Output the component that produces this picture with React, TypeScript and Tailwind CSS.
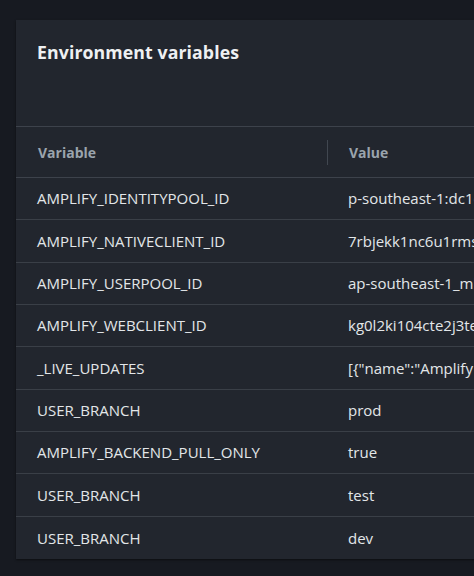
import React from "react";

const rows: [string, string][] = [
  ["AMPLIFY_IDENTITYPOOL_ID", "p-southeast-1:dc1c0a7e-4b2f"],
  ["AMPLIFY_NATIVECLIENT_ID", "7rbjekk1nc6u1rmsq0p3h5l9k2"],
  ["AMPLIFY_USERPOOL_ID", "ap-southeast-1_mkX3aB9cD"],
  ["AMPLIFY_WEBCLIENT_ID", "kg0l2ki104cte2j3te5rr8qq7v"],
  ["_LIVE_UPDATES", '[{"name":"Amplify CLI"}]'],
  ["USER_BRANCH", "prod"],
  ["AMPLIFY_BACKEND_PULL_ONLY", "true"],
  ["USER_BRANCH", "test"],
  ["USER_BRANCH", "dev"],
];

export default function App() {
  return (
    <div
      className="w-[474px] h-[576px] overflow-hidden bg-[#171a21] pt-[20px] pl-[16px]"
      style={{ fontFamily: '"Open Sans", "Noto Sans", sans-serif' }}
    >
      <div className="w-[600px] bg-[#22262e] shadow-[0_1px_2px_rgba(0,0,0,0.5)]">
        <div className="h-[106px] pl-[21px] pt-[19px]">
          <h2 className="text-[17.7px] font-bold text-[#eef0f2] leading-[26px] tracking-[0.1px]">
            Environment variables
          </h2>
        </div>
        <div className="flex h-[52px] items-center border-t border-b border-[#3d424b]">
          <div className="w-[312px] shrink-0 h-full flex items-center justify-between">
            <span className="pl-[22px] text-[14px] font-bold text-[#9ba4ad]">Variable</span>
            <span className="w-px h-[25px] bg-[#414750]"></span>
          </div>
          <div className="pl-[21px] text-[14px] font-bold text-[#9ba4ad]">Value</div>
        </div>
        {rows.map(([k, v], i) => (
          <div
            key={i}
            className={`flex items-center h-[42.33px] ${i < rows.length - 1 ? "border-b border-[#3a3f47]" : ""}`}
          >
            <div className="w-[312px] shrink-0 pl-[21px] text-[15px] text-[#e3e6e9] whitespace-nowrap">{k}</div>
            <div className="pl-[20px] text-[15px] text-[#e3e6e9] whitespace-nowrap">{v}</div>
          </div>
        ))}
      </div>
    </div>
  );
}
